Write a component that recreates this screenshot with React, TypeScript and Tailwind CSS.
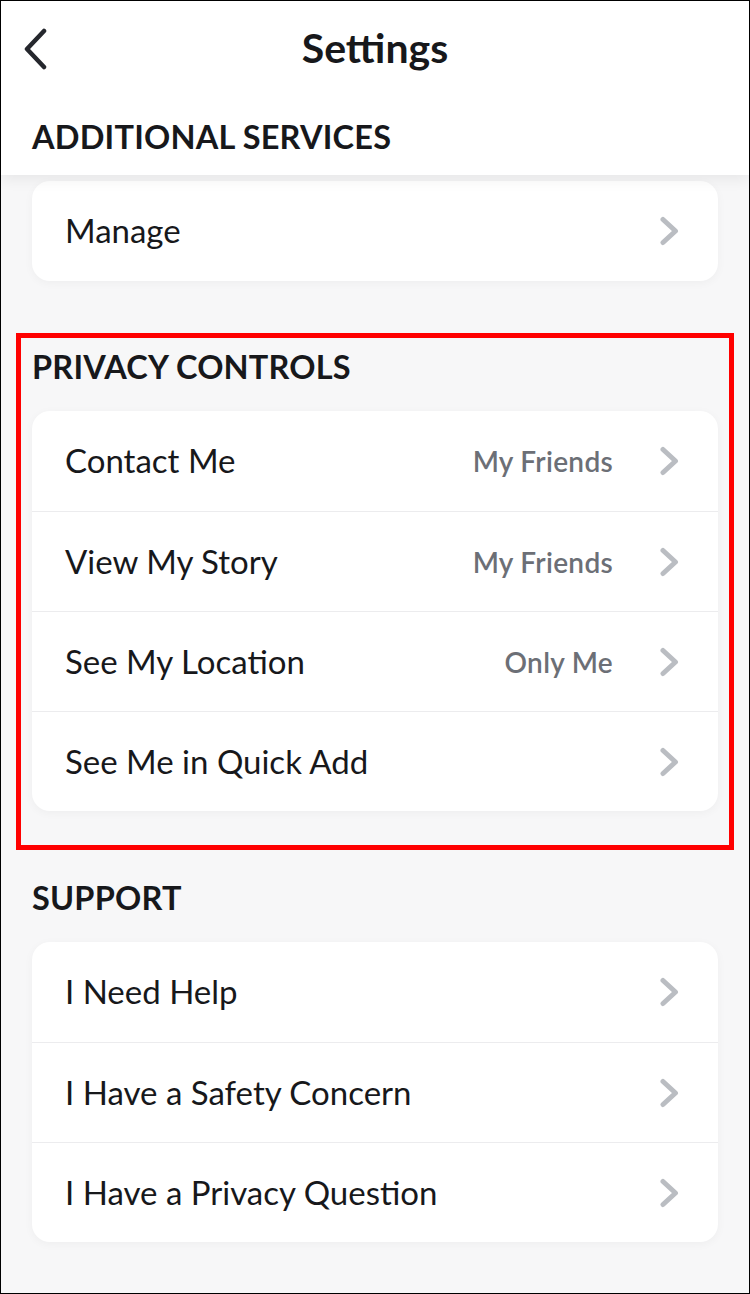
import React from 'react';

interface Row {
  label: string;
  value?: string;
}

const privacyRows: Row[] = [
  { label: 'Contact Me', value: 'My Friends' },
  { label: 'View My Story', value: 'My Friends' },
  { label: 'See My Location', value: 'Only Me' },
  { label: 'See Me in Quick Add' },
];

const supportRows: Row[] = [
  { label: 'I Need Help' },
  { label: 'I Have a Safety Concern' },
  { label: 'I Have a Privacy Question' },
];

const Chevron: React.FC = () => (
  <svg width="22" height="30" viewBox="0 0 22 30" fill="none" className="shrink-0">
    <path d="M4 3.5 L16.5 15 L4 26.5" stroke="#babdc2" strokeWidth="5" strokeLinecap="round" strokeLinejoin="round" />
  </svg>
);

const SettingsCard: React.FC<{ rows: Row[] }> = ({ rows }) => (
  <div className="bg-white rounded-[18px] shadow-[0_2px_10px_rgba(0,0,0,0.04)] overflow-hidden">
    {rows.map((row, i) => (
      <div
        key={row.label}
        className={`flex items-center h-[100px] pl-[33px] pr-[37px] ${i > 0 ? 'border-t border-[#ececee]' : ''}`}
      >
        <span className="flex-1 text-[33px] text-[#17181b]">{row.label}</span>
        {row.value && (
          <span className="text-[28px] font-semibold tracking-[0.3px] text-[#6c6f76] mr-[46px]">{row.value}</span>
        )}
        <Chevron />
      </div>
    ))}
  </div>
);

const SectionLabel: React.FC<{ children: React.ReactNode }> = ({ children }) => (
  <h2 className="text-[32.5px] font-bold leading-[36px] text-[#17181b] tracking-[0.2px]">{children}</h2>
);

export default function App() {
  return (
    <div
      className="w-[750px] h-[1294px] border border-black bg-[#f7f7f8] overflow-hidden"
      style={{ fontFamily: 'Lato, "Noto Sans", sans-serif' }}
    >
      <header className="bg-white h-[174px] px-[31px] relative z-10 shadow-[0_4px_14px_rgba(0,0,0,0.07)]">
        <div className="h-[94px] flex items-center relative">
          <svg width="26" height="44" viewBox="0 0 26 44" fill="none" className="absolute left-[-9px] top-[27px]">
            <path d="M21 3 L4 21 L21 39" stroke="#25272d" strokeWidth="4.5" strokeLinecap="round" strokeLinejoin="round" />
          </svg>
          <h1 className="flex-1 text-center text-[41px] font-bold text-[#17181b]">Settings</h1>
        </div>
        <div className="pt-[24px]">
          <SectionLabel>ADDITIONAL SERVICES</SectionLabel>
        </div>
      </header>

      <div className="px-[31px] pt-[6px]">
        <SettingsCard rows={[{ label: 'Manage' }]} />
      </div>

      <section className="mx-[15px] mt-[52px] border-[5px] border-[#ff0000] px-[11px] pt-[11px] pb-[34px]">
        <SectionLabel>PRIVACY CONTROLS</SectionLabel>
        <div className="mt-[26px]">
          <SettingsCard rows={privacyRows} />
        </div>
      </section>

      <div className="px-[31px] pt-[30px]">
        <SectionLabel>SUPPORT</SectionLabel>
        <div className="mt-[26px]">
          <SettingsCard rows={supportRows} />
        </div>
      </div>
    </div>
  );
}
